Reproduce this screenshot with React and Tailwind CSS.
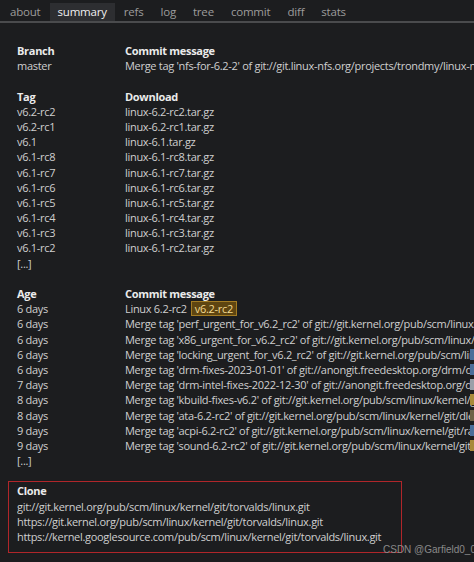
import React from "react";

const tabs = ["about", "summary", "refs", "log", "tree", "commit", "diff", "stats"];

const tags = [
  ["v6.2-rc2", "linux-6.2-rc2.tar.gz"],
  ["v6.2-rc1", "linux-6.2-rc1.tar.gz"],
  ["v6.1", "linux-6.1.tar.gz"],
  ["v6.1-rc8", "linux-6.1-rc8.tar.gz"],
  ["v6.1-rc7", "linux-6.1-rc7.tar.gz"],
  ["v6.1-rc6", "linux-6.1-rc6.tar.gz"],
  ["v6.1-rc5", "linux-6.1-rc5.tar.gz"],
  ["v6.1-rc4", "linux-6.1-rc4.tar.gz"],
  ["v6.1-rc3", "linux-6.1-rc3.tar.gz"],
  ["v6.1-rc2", "linux-6.1-rc2.tar.gz"],
];

const commits = [
  ["6 days", "Merge tag 'perf_urgent_for_v6.2_rc2' of git://git.kernel.org/pub/scm/linux/kernel/git/tip/tip", null],
  ["6 days", "Merge tag 'x86_urgent_for_v6.2_rc2' of git://git.kernel.org/pub/scm/linux/kernel/git/tip/tip", null],
  ["6 days", "Merge tag 'locking_urgent_for_v6.2_rc2' of git://git.kernel.org/pub/scm/linux/kernel/git/tip/tip", "blue"],
  ["6 days", "Merge tag 'drm-fixes-2023-01-01' of git://anongit.freedesktop.org/drm/drm", "blue"],
  ["7 days", "Merge tag 'drm-intel-fixes-2022-12-30' of git://anongit.freedesktop.org/drm/drm-intel", "gray"],
  ["8 days", "Merge tag 'kbuild-fixes-v6.2' of git://git.kernel.org/pub/scm/linux/kernel/git/masahiroy/linux-kbuild", "yellow"],
  ["8 days", "Merge tag 'ata-6.2-rc2' of git://git.kernel.org/pub/scm/linux/kernel/git/dlemoal/libata", "tan"],
  ["9 days", "Merge tag 'acpi-6.2-rc2' of git://git.kernel.org/pub/scm/linux/kernel/git/rafael/linux-pm", "blue"],
  ["9 days", "Merge tag 'sound-6.2-rc2' of git://git.kernel.org/pub/scm/linux/kernel/git/tiwai/sound", "yellow"],
];

const marks = {
  blue: "bg-[#4a6e9a]",
  gray: "bg-[#9aa0a8]",
  yellow: "bg-[#a88a3a]",
  tan: "bg-[#6e6248]",
};

function Row({ a, b, head, mark, children }) {
  return (
    <div className={`relative flex h-[15.2px] items-center leading-[15.2px] whitespace-nowrap ${head ? "font-bold text-[#ebebeb]" : "text-[#cfcfcf]"}`}>
      <div className="w-[108px] shrink-0">{a}</div>
      <div className="min-w-0 flex-1 overflow-hidden">{children || b}</div>
      {mark && <div className={`absolute right-0 top-[2px] h-[11px] w-[4px] ${marks[mark]}`} />}
    </div>
  );
}

const Blank = () => <div className="h-[15.2px]" />;

export default function App() {
  return (
    <div
      className="relative h-[562px] w-[474px] overflow-hidden bg-[#1c1d1f] text-[11px] tracking-[-0.3px]"
      style={{ fontFamily: '"Open Sans", "Noto Sans", sans-serif' }}
    >
      <div className="flex h-[23px] items-end border-b-2 border-[#4a4b4d] pl-[2px] text-[11.5px] tracking-[-0.2px]">
        {tabs.map((t) => (
          <div
            key={t}
            className={`flex h-[18px] items-center px-[8px] leading-none ${
              t === "summary" ? "bg-[#2d2e31] text-[#f0f0f0]" : "text-[#9c9c9c]"
            } ${t === "about" ? "" : "ml-[1px]"}`}
          >
            {t}
          </div>
        ))}
      </div>

      <div className="pl-[17px] pt-[20px]">
        <Row head a="Branch" b="Commit message" />
        <Row a="master" b="Merge tag 'nfs-for-6.2-2' of git://git.linux-nfs.org/projects/trondmy/linux-nfs" />
        <Blank />
        <Row head a="Tag" b="Download" />
        {tags.map(([t, d]) => (
          <Row key={t} a={t} b={d} />
        ))}
        <Row a="[...]" />
        <Blank />
        <Row head a="Age" b="Commit message" />
        <Row a="6 days">
          <span>Linux 6.2-rc2</span>
          <span className="ml-[4px] inline-block border border-[#a27b22] bg-[#5e4511] px-[3px] leading-[13px] text-[#f2da92]">
            v6.2-rc2
          </span>
        </Row>
        {commits.map(([a, b, m], i) => (
          <Row key={i} a={a} b={b} mark={m} />
        ))}
        <Row a="[...]" />
        <Blank />
        <Row head a="Clone" />
        <div className="-ml-[108px]">
          <Row b="git://git.kernel.org/pub/scm/linux/kernel/git/torvalds/linux.git" />
          <Row b="https://git.kernel.org/pub/scm/linux/kernel/git/torvalds/linux.git" />
          <Row b="https://kernel.googlesource.com/pub/scm/linux/kernel/git/torvalds/linux.git" />
        </div>
      </div>

      <div className="pointer-events-none absolute left-[8px] top-[481px] h-[72px] w-[394px] border border-[#b0262a]" />
      <div
        className="absolute left-[383px] top-[543px] whitespace-nowrap text-[10px] leading-[14px] tracking-normal text-[#8a8a8a]"
        style={{ fontFamily: '"Liberation Sans", Arial, sans-serif' }}
      >
        CSDN @Garfield0_0
      </div>
    </div>
  );
}
